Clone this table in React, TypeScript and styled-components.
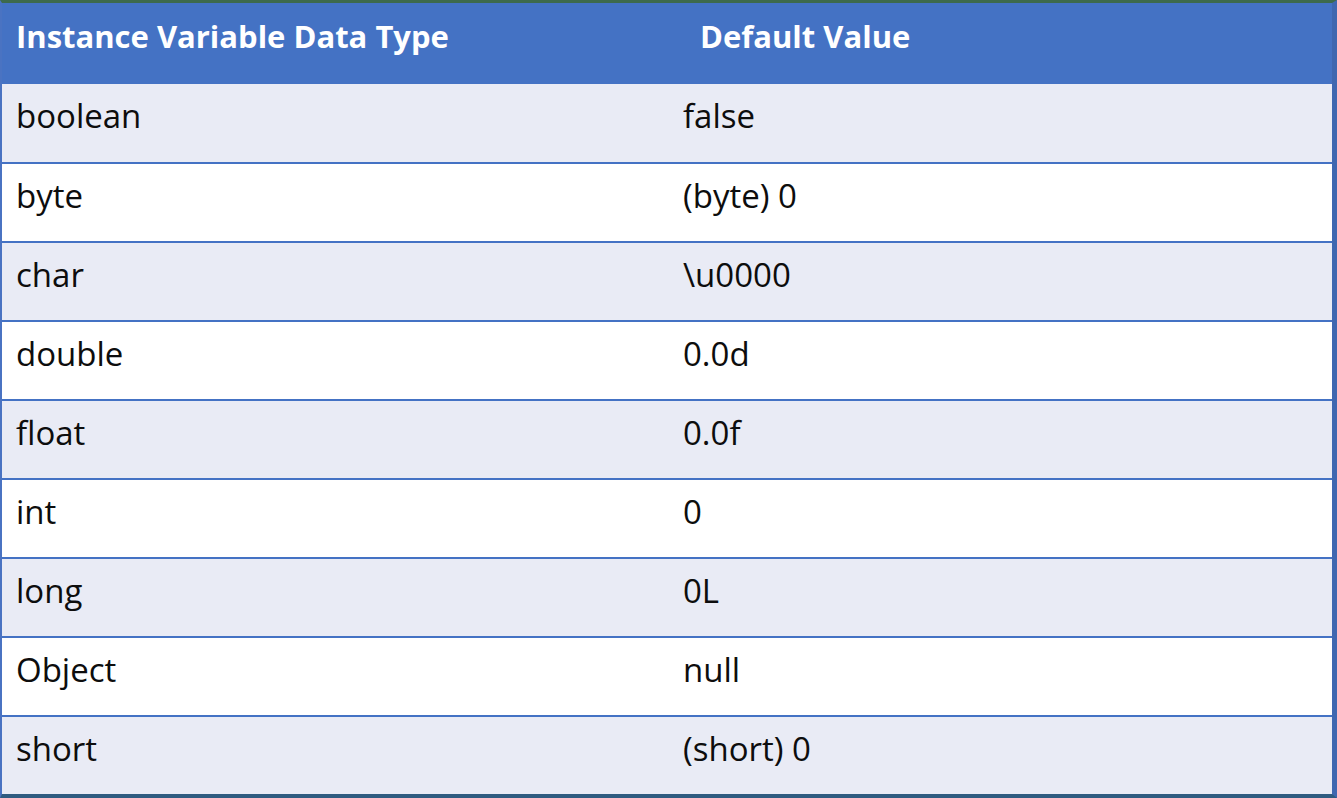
import React from "react";
import styled, { createGlobalStyle } from "styled-components";

const Global = createGlobalStyle`
  html, body { margin: 0; padding: 0; background: #2e5d6e; }
  body { font-family: "Open Sans", Lato, sans-serif; }
`;

const Frame = styled.div`
  width: 1337px;
  height: 798px;
  box-sizing: border-box;
  border-top: 3px solid #3d6a4c;
  border-left: 2px solid #4a73c2;
  border-right: 5px solid #3f67b0;
  border-bottom: 4px solid #2f5b80;
  background: #e9ebf5;
  display: flex;
  flex-direction: column;
  overflow: hidden;
`;

const Grid = styled.div`
  display: grid;
  grid-template-columns: 665px 1fr;
`;

const HeaderRow = styled(Grid)`
  height: 81px;
  flex: none;
  background: #4472c4;
  margin-left: -2px;
  margin-right: -5px;
`;

const HeadCell = styled.div<{ $indent: number }>`
  color: #ffffff;
  font-weight: 700;
  font-size: 31px;
  padding-left: ${(p) => p.$indent}px;
  padding-top: 13px;
  line-height: 40px;
  white-space: nowrap;
`;

const Row = styled(Grid)<{ $shade: boolean; $h: number; $line: boolean }>`
  height: ${(p) => p.$h}px;
  flex: none;
  box-sizing: border-box;
  background: ${(p) => (p.$shade ? "#e9ebf5" : "#ffffff")};
  border-bottom: ${(p) => (p.$line ? "2px solid #4472c4" : "none")};
`;

const Cell = styled.div<{ $indent: number }>`
  color: #0d0d0d;
  font-size: 33px;
  padding-left: ${(p) => p.$indent}px;
  padding-top: 12px;
  line-height: 40px;
  white-space: nowrap;
`;

const rows: [string, string][] = [
  ["boolean", "false"],
  ["byte", "(byte) 0"],
  ["char", "\\u0000"],
  ["double", "0.0d"],
  ["float", "0.0f"],
  ["int", "0"],
  ["long", "0L"],
  ["Object", "null"],
  ["short", "(short) 0"],
];

export default function App() {
  return (
    <>
      <Global />
      <Frame>
        <HeaderRow>
          <HeadCell $indent={16}>Instance Variable Data Type</HeadCell>
          <HeadCell $indent={35}>Default Value</HeadCell>
        </HeaderRow>
        {rows.map(([t, v], i) => {
          const last = i === rows.length - 1;
          const h = i === 0 ? 80 : last ? 77 : 79;
          return (
            <Row key={t} $shade={i % 2 === 0} $h={h} $line={!last}>
              <Cell $indent={14}>{t}</Cell>
              <Cell $indent={16}>{v}</Cell>
            </Row>
          );
        })}
      </Frame>
    </>
  );
}
